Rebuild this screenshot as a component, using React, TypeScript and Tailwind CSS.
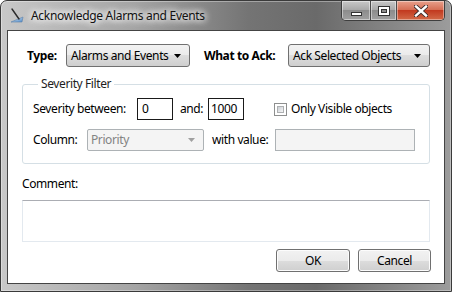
import React from 'react';

const font = { fontFamily: '"Noto Sans", "Open Sans", Arial, sans-serif' };

const Arrow: React.FC<{ color?: string }> = ({ color = '#000' }) => (
  <svg width="7" height="4" viewBox="0 0 7 4"><path d="M0 0h7L3.5 4z" fill={color} /></svg>
);

const Combo: React.FC<{ value: string; className: string }> = ({ value, className }) => (
  <div className={`h-[23px] flex items-center justify-between pl-[4px] pr-[8px] rounded-[3px] border border-[#707070] bg-[linear-gradient(#f2f2f2_0%,#ebebeb_50%,#dddddd_50%,#cfcfcf_100%)] ${className}`}>
    <span>{value}</span>
    <Arrow />
  </div>
);

const WinButton: React.FC<{ label: string; className: string }> = ({ label, className }) => (
  <div className={`h-[23px] flex items-center justify-center rounded-[3px] border border-[#707070] bg-[linear-gradient(#f2f2f2_0%,#ebebeb_50%,#dddddd_50%,#cfcfcf_100%)] shadow-[inset_0_0_0_1px_#fcfcfc] ${className}`}>
    {label}
  </div>
);

const App: React.FC = () => {
  return (
    <div className="w-[452px] h-[293px] bg-white text-[12px] leading-[16px] tracking-[-0.4px] whitespace-nowrap text-black" style={font}>
      <div className="w-[452px] h-[292px] flex flex-col rounded-t-[7px] border border-[#3a3a3a] bg-[linear-gradient(90deg,#c8c8c8_0%,#a4a4a4_30%,#747474_55%,#6a6a6a_70%,#9c9c9c_100%)] shadow-[inset_0_0_0_1px_rgba(255,255,255,0.35)]">
        {/* title bar */}
        <div className="h-[29px] flex items-start">
          <svg className="mt-[7px] ml-[9px]" width="14" height="15" viewBox="0 0 14 15">
            <defs>
              <linearGradient id="ic" x1="0" y1="0" x2="1" y2="1">
                <stop offset="0" stopColor="#e6f2fb" />
                <stop offset="1" stopColor="#4c86c4" />
              </linearGradient>
            </defs>
            <path d="M1 14 L13 9 L12 14 Z" fill="url(#ic)" stroke="#5a7fa8" strokeWidth="0.6" />
            <path d="M2 1 L9 11" stroke="#2a2a2a" strokeWidth="1.4" strokeLinecap="round" />
          </svg>
          <span className="mt-[7px] ml-[7px] text-[12px] tracking-[-0.3px] text-[#111] [text-shadow:0_0_6px_#fff,0_0_8px_#fff,0_0_10px_#fff]">Acknowledge Alarms and Events</span>
          <div className="ml-auto mr-[6px] flex h-[20px] rounded-b-[5px] border border-t-0 border-[#3e3e3e] overflow-hidden">
            <div className="w-[29px] flex items-center justify-center border-r border-[#4a4a4a] bg-[linear-gradient(#c8c8c8_0%,#a6a6a6_50%,#8c8c8c_50%,#a0a0a0_100%)] shadow-[inset_0_0_0_1px_rgba(255,255,255,0.45)]">
              <div className="w-[11px] h-[4px] mt-[6px] bg-white border border-[#333]" />
            </div>
            <div className="w-[26px] flex items-center justify-center border-r border-[#4a4a4a] bg-[linear-gradient(#c8c8c8_0%,#a6a6a6_50%,#8c8c8c_50%,#a0a0a0_100%)] shadow-[inset_0_0_0_1px_rgba(255,255,255,0.45)]">
              <div className="w-[10px] h-[8px] border-[2px] border-white outline outline-1 outline-[#333] shadow-[inset_0_0_0_1px_#333]" />
            </div>
            <div className="w-[47px] flex items-center justify-center bg-[linear-gradient(#e8a08c_0%,#d46a50_50%,#c23a20_50%,#d26a48_100%)] shadow-[inset_0_0_0_1px_rgba(255,255,255,0.4)]">
              <svg width="14" height="12" viewBox="0 0 14 12">
                <path d="M2 1.5 L12 10.5 M12 1.5 L2 10.5" stroke="#3a2a2a" strokeWidth="4.2" strokeLinecap="square" />
                <path d="M2 1.5 L12 10.5 M12 1.5 L2 10.5" stroke="#fff" strokeWidth="2.4" strokeLinecap="square" />
              </svg>
            </div>
          </div>
        </div>

        {/* client area */}
        <div className="mx-[6px] h-[254px] border border-[#444] bg-white pl-[14px] pt-[13px] flex flex-col">
          <div className="flex items-center ml-[5px] h-[23px]">
            <span className="w-[39px] font-bold">Type:</span>
            <Combo value="Alarms and Events" className="w-[124px]" />
            <span className="ml-[14px] w-[84px] font-bold">What to Ack:</span>
            <Combo value="Ack Selected Objects" className="w-[142px]" />
          </div>

          <fieldset className="mt-[9px] w-[408px] h-[88px] border border-[#d5dfe5] rounded-[3px] pl-[10px] pt-[6px]">
            <legend className="ml-[5px] px-[3px] text-[#1e1e1e]">Severity Filter</legend>
            <div className="flex items-center h-[22px]">
              <span className="w-[104px]">Severity between:</span>
              <div className="w-[36px] h-[22px] border border-[#1a1a1a] pl-[4px] flex items-center">0</div>
              <span className="ml-[7px] w-[28px]">and:</span>
              <div className="w-[36px] h-[22px] border border-[#1a1a1a] pl-[2px] flex items-center">1000</div>
              <div className="ml-[30px] w-[13px] h-[13px] border border-[#8e8f8f] bg-white p-[2px]">
                <div className="w-full h-full border border-[#aeb0b2] bg-[linear-gradient(135deg,#cbcfd5,#f6f6f6)]" />
              </div>
              <span className="ml-[4px]">Only Visible objects</span>
            </div>
            <div className="flex items-center h-[22px] mt-[9px]">
              <span className="w-[54px]">Column:</span>
              <div className="w-[117px] h-[22px] flex items-center justify-between pl-[3px] pr-[8px] rounded-[2px] border border-[#adb2b5] bg-[#f4f4f4] text-[#838383]">
                <span>Priority</span>
                <Arrow color="#a0a0a0" />
              </div>
              <span className="ml-[8px] w-[63px]">with value:</span>
              <div className="w-[140px] h-[22px] border border-[#adb2b5] bg-[#f4f4f4]" />
            </div>
          </fieldset>

          <span className="mt-[12px]">Comment:</span>
          <div className="mt-[8px] w-[408px] h-[42px] border border-[#e3e9ef] border-t-[#abadb3]" />

          <div className="mt-[7px] w-[409px] flex justify-end gap-[8px]">
            <WinButton label="OK" className="w-[74px]" />
            <WinButton label="Cancel" className="w-[73px]" />
          </div>
        </div>
      </div>
    </div>
  );
};

export default App;
